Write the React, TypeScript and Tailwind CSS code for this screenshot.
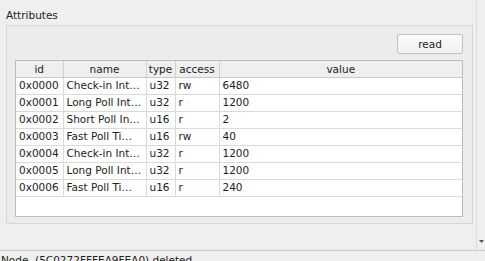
const rows = [
  ['0x0000', 'Check-in Int…', 'u32', 'rw', '6480'],
  ['0x0001', 'Long Poll Int…', 'u32', 'r', '1200'],
  ['0x0002', 'Short Poll In…', 'u16', 'r', '2'],
  ['0x0003', 'Fast Poll Ti…', 'u16', 'rw', '40'],
  ['0x0004', 'Check-in Int…', 'u32', 'r', '1200'],
  ['0x0005', 'Long Poll Int…', 'u32', 'r', '1200'],
  ['0x0006', 'Fast Poll Ti…', 'u16', 'r', '240'],
];

export default function App() {
  return (
    <div
      className="w-[485px] h-[261px] overflow-hidden bg-[#efefef] text-[10.5px] text-[#222] flex flex-col"
      style={{ fontFamily: '"DejaVu Sans", sans-serif' }}
    >
      <div className="flex h-[250px] shrink-0">
        {/* scroll area */}
        <div className="w-[477px] border-r border-[#dcdcdc] pl-[6px] pr-[3px]">
          <div className="h-[25px] pt-[9px] leading-[13px]">Attributes</div>
          <div className="h-[199px] border border-[#d6d6d6] bg-[#ececec] pt-[8px] pl-[8px] pr-[9px]">
            <div className="flex justify-end">
              <button className="w-[66px] h-[20px] rounded-[2px] border border-[#c2c2c2] bg-gradient-to-b from-[#fbfbfb] to-[#f0f0f0] text-[#222] text-[10.5px] leading-none">
                read
              </button>
            </div>
            <div className="mt-[6px] h-[157px] border border-[#bdbdbd] bg-white">
              <table className="w-full border-collapse table-fixed">
                <colgroup>
                  <col className="w-[47px]" />
                  <col className="w-[83px]" />
                  <col className="w-[29px]" />
                  <col className="w-[44px]" />
                  <col />
                </colgroup>
                <thead>
                  <tr className="h-[16px] bg-[#efefef]">
                    {['id', 'name', 'type', 'access', 'value'].map((h, i) => (
                      <th
                        key={h}
                        className={`font-normal text-center leading-none border-b border-[#c8c8c8] p-0 ${i < 4 ? 'border-r border-r-[#d0d0d0]' : ''}`}
                      >
                        {h}
                      </th>
                    ))}
                  </tr>
                </thead>
                <tbody>
                  {rows.map((r) => (
                    <tr key={r[0]} className="h-[17px]">
                      {r.map((c, i) => (
                        <td
                          key={i}
                          className={`px-[3px] p-0 leading-none whitespace-nowrap overflow-hidden border-b border-[#dadada] ${i < 4 ? 'border-r border-r-[#dadada]' : ''}`}
                        >
                          {c}
                        </td>
                      ))}
                    </tr>
                  ))}
                </tbody>
              </table>
            </div>
          </div>
        </div>
        {/* scrollbar */}
        <div className="flex-1 flex flex-col justify-end items-center pb-[7px]">
          <svg width="5" height="3" viewBox="0 0 5 3">
            <path d="M0 0h5L2.5 3z" fill="#555" />
          </svg>
        </div>
      </div>
      <div className="shrink-0 border-t border-[#c9c9c9] pl-[1px] pt-[3px] leading-[13px] whitespace-nowrap">
        Node&nbsp; (5C0272FFFEA9FEA0) deleted
      </div>
    </div>
  );
}
